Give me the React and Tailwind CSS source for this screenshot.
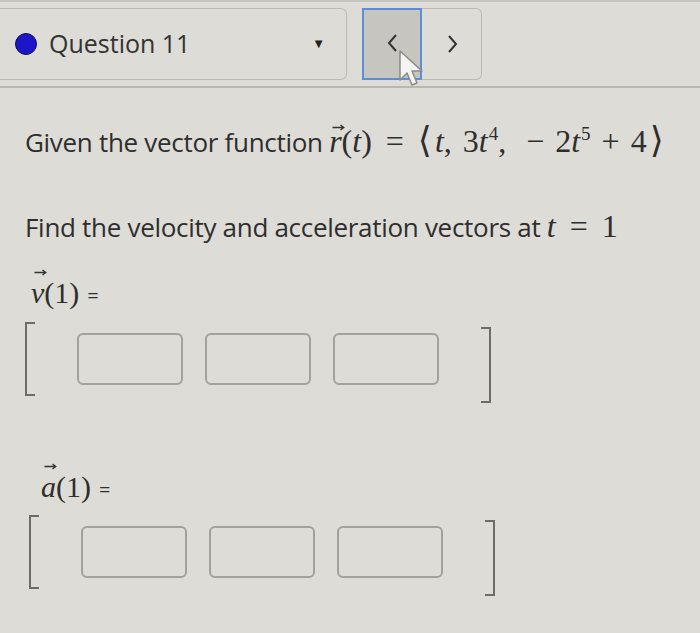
import React from 'react';

const sans = { fontFamily: '"Open Sans", "Noto Sans", sans-serif' };
const serif = { fontFamily: '"Liberation Serif", "DejaVu Serif", serif' };

function Vec({ ch }) {
    // letter with a small arrow over it
    return (
        <span className="relative inline-block italic" style={serif}>
            <svg width="13" height="7" viewBox="0 0 13 7" className="absolute left-[3px] -top-[1px]">
                <path d="M0.5 3.5 H11.5 M8.5 1 L11.8 3.5 L8.5 6" fill="none" stroke="#333" strokeWidth="1.3" />
            </svg>
            {ch}
        </span>
    );
}

function Sup({ children }) {
    return <span className="relative -top-[12px] text-[19px] ml-[1px]">{children}</span>;
}

function Box() {
    return <div className="w-[106px] h-[52px] rounded-md border-2 border-[#a2a19d]" />;
}

function VectorInput() {
    return (
        <div className="flex items-center gap-[20px] h-[84px]">
            <div className="w-[10px] h-[74px] border-l-2 border-t-2 border-b-2 border-[#6d6c69]" />
            <div className="flex items-center gap-[22px] ml-[22px] mr-[22px]">
                <Box />
                <Box />
                <Box />
            </div>
            <div className="w-[10px] h-[76px] border-r-2 border-t-2 border-b-2 border-[#6d6c69] mt-[12px]" />
        </div>
    );
}

export default function App() {
    return (
        <div className="w-[700px] h-[633px] overflow-hidden bg-[#dddcd6] text-[#2e2e2e]" style={sans}>
            {/* question header */}
            <div className="h-[88px] border-t-2 border-b-2 border-t-[#c6c5bf] border-b-[#b9b8b2] flex items-start pt-[6px]">
                <div className="w-[347px] h-[72px] border border-l-0 border-[#bcbbb5] rounded-r-md flex items-center px-[15px]">
                    <span className="w-[22px] h-[22px] rounded-full bg-[#1c16c8] border border-[#0c0a60]" />
                    <span className="ml-[12px] text-[25px] text-[#333]">Question 11</span>
                    <span className="ml-auto mr-[6px] text-[13px] text-[#222]">&#9660;</span>
                </div>
                <div className="ml-[15px] flex">
                    <div className="relative w-[60px] h-[72px] bg-[#c6c5bf] border-2 border-[#5a8fd8] flex items-center justify-center">
                        <svg width="14" height="22" viewBox="0 0 14 22" className="mb-[2px]">
                            <path d="M11 3 L4 11 L11 19" fill="none" stroke="#333" strokeWidth="2" />
                        </svg>
                        <svg width="26" height="38" viewBox="0 0 26 38" className="absolute left-[34px] top-[40px]">
                            <path d="M2 1 L2 30 L9 23 L14 35 L19 33 L14 21 L24 21 Z" fill="#f4f4f2" stroke="#8a8a86" strokeWidth="1.5" strokeLinejoin="round" />
                        </svg>
                    </div>
                    <div className="w-[60px] h-[72px] border border-l-0 border-[#bcbbb5] rounded-r-md flex items-center justify-center">
                        <svg width="14" height="22" viewBox="0 0 14 22">
                            <path d="M4 3 L11 11 L4 19" fill="none" stroke="#333" strokeWidth="2" />
                        </svg>
                    </div>
                </div>
            </div>

            <div className="pl-[25px]">
                <p className="mt-[34px] h-[34px] text-[26px] leading-[34px] flex items-baseline whitespace-nowrap tracking-[-0.3px]">
                    <span>Given the vector function&nbsp;</span>
                    <span className="text-[32px] leading-none tracking-normal" style={serif}>
                        <Vec ch="r" />(<i>t</i>)
                        <span className="mx-[14px]">=</span>
                        <span className="text-[36px] mr-[3px]">&#10216;</span><i>t</i>, <span className="ml-[3px]">3</span><i>t</i><Sup>4</Sup>,
                        <span className="ml-[20px] mr-[11px]">&#8722;</span>2<i>t</i><Sup>5</Sup>
                        <span className="mx-[11px]">+</span>4<span className="text-[36px] ml-[3px]">&#10217;</span>
                    </span>
                </p>
                <p className="mt-[54px] h-[34px] text-[26px] leading-[34px] flex items-baseline whitespace-nowrap tracking-[-0.3px]">
                    <span>Find the velocity and acceleration vectors at&nbsp;</span>
                    <span className="text-[32px] leading-none tracking-normal" style={serif}>
                        <i>t</i><span className="mx-[14px]">=</span>1
                    </span>
                </p>

                <div className="mt-[26px] ml-[6px] flex items-baseline text-[30px]">
                    <span style={serif}><Vec ch="v" />(1)</span>
                    <span className="ml-[8px] text-[20px]">=</span>
                </div>
                <div className="mt-[2px]">
                    <VectorInput />
                </div>

                <div className="mt-[63px] ml-[16px] flex items-baseline text-[30px]">
                    <span style={serif}><Vec ch="a" />(1)</span>
                    <span className="ml-[8px] text-[20px]">=</span>
                </div>
                <div className="mt-[1px] ml-[4px]">
                    <VectorInput />
                </div>
            </div>
        </div>
    );
}
